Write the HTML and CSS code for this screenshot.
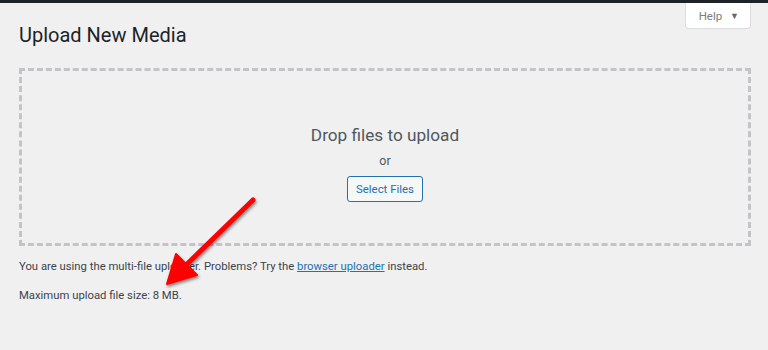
FILE: index.html
```html
<!DOCTYPE html>
<html lang="en">
<head>
  <meta charset="UTF-8">
  <title>Upload New Media</title>
  <link rel="stylesheet" href="styles.css">
</head>
<body>
  <div class="adminbar"></div>
  <div class="wrap">
    <div class="help-row">
      <button class="help-btn">Help <span class="caret">&#9660;</span></button>
    </div>
    <h1>Upload New Media</h1>
    <div class="drop-area">
      <p class="drop-title">Drop files to upload</p>
      <p class="drop-or">or</p>
      <button class="select-btn">Select Files</button>
    </div>
    <p class="note">You are using the multi-file uploader. Problems? Try the <a href="#">browser uploader</a> instead.</p>
    <p class="note">Maximum upload file size: 8 MB.</p>
    <svg class="arrow" width="120" height="110" viewBox="150 185 120 110">
      <defs>
        <filter id="shadow" x="-20%" y="-20%" width="140%" height="140%">
          <feDropShadow dx="1" dy="2" stdDeviation="1.5" flood-color="#000" flood-opacity="0.45"/>
        </filter>
      </defs>
      <g filter="url(#shadow)" fill="#f00" stroke="#f00">
        <line x1="253" y1="200" x2="183" y2="268" stroke-width="5" stroke-linecap="round"/>
        <polygon points="167,284 176,254 197,275" stroke-width="2" stroke-linejoin="round"/>
      </g>
    </svg>
  </div>
</body>
</html>
```

FILE: styles.css
```css
body { margin: 0; background: #f0f0f1; font-family: Roboto, "Liberation Sans", sans-serif; color: #3c434a; }
.adminbar { height: 3px; background: #1d2327; }
.wrap { position: relative; padding: 0 17px 0 19px; }
.help-row { display: flex; justify-content: flex-end; height: 0; }
.help-btn { height: 26px; padding: 0 11px 0 13px; background: #fff; border: 1px solid #dcdcde; border-top: none; border-radius: 0 0 4px 4px; font-family: inherit; font-size: 11.5px; color: #787c82; cursor: pointer; }
.help-btn .caret { font-size: 9px; margin-left: 5px; vertical-align: 1px; color: #646970; }
h1 { margin: 0; padding: 18px 0 0; font-size: 20px; font-weight: 400; line-height: 29px; color: #1d2327; }
.drop-area { margin-top: 18px; height: 172px; border: 3px dashed #c3c4c7; display: flex; flex-direction: column; align-items: center; justify-content: center; }
.drop-title { margin: 10px 0 0; font-size: 17.2px; color: #50575e; line-height: 24px; }
.drop-or { margin: 6px 0 0; font-size: 12.5px; line-height: 16px; color: #50575e; }
.select-btn { margin-top: 7px; height: 26px; padding: 0 8px; background: #f6f7f7; border: 1px solid #2271b1; border-radius: 3px; color: #2271b1; font-family: inherit; font-size: 11.4px; cursor: pointer; }
.note { margin: 13px 0 0; font-size: 11.3px; line-height: 16px; color: #3c434a; }
.note + .note { margin-top: 13px; }
.note a { color: #2271b1; }
.arrow { position: absolute; left: 150px; top: 182px; overflow: visible; }
```
